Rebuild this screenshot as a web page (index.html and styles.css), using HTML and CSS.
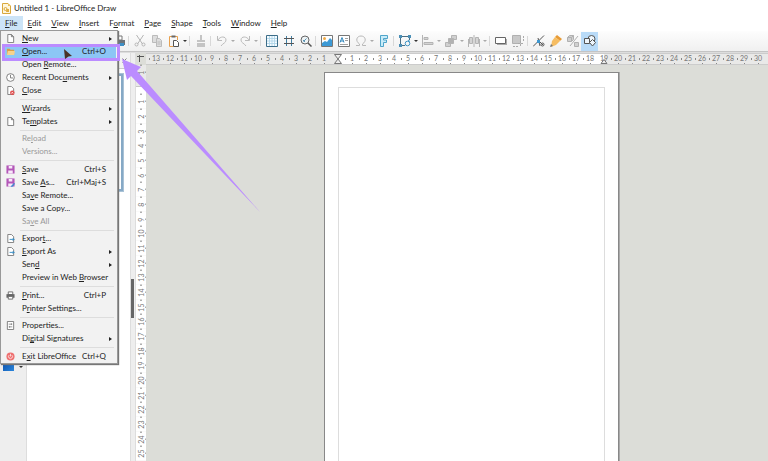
FILE: index.html
```html
<!DOCTYPE html>
<html lang="en">
<head>
    <meta charset="UTF-8">
    <meta name="viewport" content="width=device-width, initial-scale=1.0">
    <title>Untitled 1 - LibreOffice Draw</title>
    <link rel="stylesheet" href="styles.css">
</head>
<body>
    <header class="titlebar">
        <svg class="app-icon" viewBox="0 0 9 11"><path d="M.5.5h5.500l2.500 2.500v7.500h-8z" fill="#fff6dc" stroke="#d9a83c"/><path d="M6 .5v2.500h2.500" fill="#e8bd55"/><circle cx="3.500" cy="6" r="1.500" fill="none" stroke="#d9a83c"/><path d="M4.500 6h2.500v3h-3z" fill="#e0ad42"/></svg>
        <span>Untitled 1 - LibreOffice Draw</span>
    </header>

    <nav class="menubar">
        <button class="active"><u>F</u>ile</button>
        <button><u>E</u>dit</button>
        <button><u>V</u>iew</button>
        <button><u>I</u>nsert</button>
        <button>F<u>o</u>rmat</button>
        <button><u>P</u>age</button>
        <button><u>S</u>hape</button>
        <button><u>T</u>ools</button>
        <button><u>W</u>indow</button>
        <button><u>H</u>elp</button>
    </nav>

    <div class="toolbar">
        <button class="tool" aria-label="Print"><svg viewBox="0 0 12 12"><path d="M3 1h6v4H3z" fill="#fff" stroke="#777"/><path d="M0 5h12v5H0z" fill="#6d7378"/><path d="M6 8h5v3H6z" fill="#3f8fc4"/></svg></button>
        <i class="sep"></i>
        <button class="tool" aria-label="Cut"><svg viewBox="0 0 12 12" fill="none" stroke="#b5b5b5"><path d="M2.500 0l6 9M9.500 0l-6 9"/><circle cx="2.500" cy="9.500" r="1.500"/><circle cx="9.500" cy="9.500" r="1.500"/></svg></button>
        <button class="tool" aria-label="Copy"><svg viewBox="0 0 12 12" fill="#ddd" stroke="#bbb"><path d="M1.500.5h5v7h-5z"/><path d="M5.500 3.500h3l2 2v6h-5z"/><path d="M6.500 7h3M6.500 9h3"/></svg></button>
        <button class="tool" aria-label="Paste"><svg viewBox="0 0 12 12"><path d="M5 11.500H1.500v-10h8V5" fill="none" stroke="#e9a04c"/><path d="M3.500.5h4v2h-4z" fill="#666"/><path d="M5.500 5.500h3l2 2v4h-5z" fill="#fff" stroke="#555"/></svg></button>
        <button class="drop" aria-label="Paste options"></button>
        <i class="sep"></i>
        <button class="tool" aria-label="Clone formatting"><svg viewBox="0 0 12 12" fill="#c4c4c4"><path d="M5 0h2v5h3v2H2V5h3zM2 8h8v4H2z"/></svg></button>
        <i class="sep"></i>
        <button class="tool" aria-label="Undo"><svg viewBox="0 0 12 12" fill="none" stroke="#bcbcbc"><path d="M1.500 1v4.500H6M2 5c2-4 8-4 8 0 0 3-3 3-5 6"/></svg></button>
        <button class="drop off" aria-label="Undo list"></button>
        <button class="tool" aria-label="Redo"><svg viewBox="0 0 12 12" fill="none" stroke="#bcbcbc"><path d="M10.500 1v4.500H6M10 5C8 1 2 1 2 5c0 3 3 3 5 6"/></svg></button>
        <button class="drop off" aria-label="Redo list"></button>
        <i class="sep"></i>
        <button class="tool" aria-label="Display grid"><svg viewBox="0 0 12 12"><path d="M.5.5h11v11H.5z" fill="#f4fbff" stroke="#3c6d88"/><path d="M3.500 1v10M6 1v10M8.500 1v10M1 3.500h10M1 6h10M1 8.500h10" stroke="#a9d2e6" stroke-width=".8"/></svg></button>
        <button class="tool" aria-label="Helplines"><svg viewBox="0 0 12 12" fill="none"><path d="M3.500 1v10M8.500 1v10" stroke="#3f7fa3"/><path d="M1 3.500h10M1 8.500h10" stroke="#555"/></svg></button>
        <button class="tool" aria-label="Zoom"><svg viewBox="0 0 12 12" fill="none"><circle cx="5" cy="5" r="4" fill="#eef3f5" stroke="#666"/><path d="M8 8l3.500 3.500" stroke="#555" stroke-width="1.500"/><path d="M3.500 6.500l3-3M3 5l2 2" stroke="#5c96b6"/></svg></button>
        <i class="sep"></i>
        <button class="tool" aria-label="Insert image"><svg viewBox="0 0 12 12"><path d="M.5.5h11v11H.5z" fill="#fff" stroke="#777"/><path d="M1 8l3-2 2 1 3-4 2 2v6H1z" fill="#3d9ad6"/><circle cx="3.500" cy="3.500" r="1.500" fill="#f0ab46"/></svg></button>
        <button class="tool" aria-label="Insert text box"><svg viewBox="0 0 12 12" fill="none"><path d="M.5.500h11v11H.5z" fill="#fff" stroke="#777"/><path d="M2 7.500l2-5 2 5M2.500 6h3" stroke="#2f86bd"/><path d="M7 3.500h3M7 5.500h3M2 9.500h8" stroke="#888" stroke-width=".8"/></svg></button>
        <button class="tool" aria-label="Special character"><svg viewBox="0 0 12 12" fill="none" stroke="#b8b8b8"><path d="M1 10.500h3.500V9C0 6 1.500 1 6 1s6 5 1.500 8v1.500H11"/></svg></button>
        <button class="drop off" aria-label="Character list"></button>
        <button class="tool" aria-label="Fontwork"><svg viewBox="0 0 12 12" fill="#c9ecf9" stroke="#3f9cc4" stroke-width=".9"><path d="M2.500 .5h7v3h-4v1.500h3v2.500h-3v4h-3z"/></svg></button>
        <i class="sep"></i>
        <button class="tool" aria-label="Transformations"><svg viewBox="0 0 12 12" fill="none"><path d="M6 10.500H1.500v-9h9V5" stroke="#4b6f85"/><path d="M0 0h3v3H0zM9 0h3v3H9zM0 9h3v3H0z" fill="#4b8fb6"/><circle cx="8.500" cy="8.500" r="2.300" stroke="#3f94c4"/><path d="M9 5l2 1.500" stroke="#3f94c4"/></svg></button>
        <button class="drop" aria-label="Transformation list"></button>
        <button class="tool" aria-label="Align"><svg viewBox="0 0 12 12" fill="#d4d4d4" stroke="#b4b4b4"><path d="M.5 0v12M2 2.500h4v2H2zM2 7.500h9v2H2z"/></svg></button>
        <button class="drop off" aria-label="Align list"></button>
        <button class="tool" aria-label="Arrange"><svg viewBox="0 0 12 12" fill="#d0d0d0" stroke="#b4b4b4"><path d="M6.500.5h5v4h-5zM.5 7.500h5v4h-5z"/><path d="M3.500 3.500h5v5h-5z" fill="#b2b2b2"/></svg></button>
        <button class="drop off" aria-label="Arrange list"></button>
        <button class="tool" aria-label="Distribute"><svg viewBox="0 0 12 12" fill="#d4d4d4" stroke="#b4b4b4"><path d="M.5 4v8M6 0v12M11.500 4v8M1.500 2.500h3v6h-3zM7.500 2.500h3v6h-3z"/></svg></button>
        <button class="drop off" aria-label="Distribute list"></button>
        <i class="sep"></i>
        <button class="tool" aria-label="Shadow"><svg viewBox="0 0 12 12"><path d="M2 4h10v6H2z" fill="#aaa"/><path d="M.5 2.500h10v6H.5z" fill="#fff" stroke="#666"/></svg></button>
        <button class="tool" aria-label="Crop"><svg viewBox="0 0 12 12"><path d="M.5.500h8v8h-8z" fill="#c8c8c8" stroke="#b0b0b0"/><path d="M1 11.500h5M8.500 6v6M6 8.500h6M11.500 1v6" stroke="#aaa" stroke-dasharray="2 1"/></svg></button>
        <i class="sep"></i>
        <button class="tool" aria-label="Edit points"><svg viewBox="0 0 12 12" fill="none" stroke="#555"><path d="M0 11.500L11 .5M5 3l2 8M6 6l4 4"/><circle cx="9.500" cy="9.500" r="1.500"/><path d="M4 5h3v3H4z" fill="#3c96cf" stroke="none"/></svg></button>
        <button class="tool" aria-label="Glue points"><svg viewBox="0 0 12 12"><path d="M7 0l5 4-2 2-5-4z" fill="#e79a35"/><path d="M5 2l5 4-4 4-5 2 1-6z" fill="#f6bd62"/><path d="M0 12l1-3 2 2z" fill="#777"/></svg></button>
        <button class="tool" aria-label="Toggle extrusion"><svg viewBox="0 0 12 12" fill="#d0d0d0" stroke="#b0b0b0"><path d="M.5 2.500l2-2h4v4l-2 2h-4zM.5 2.500h4v4M4.500 2.500l2-2M7.500 7.500h4v4h-4zM3 11l8-10"/></svg></button>
        <button class="tool on" aria-label="Show draw functions"><svg viewBox="0 0 12 12" fill="#eef6fd" stroke="#555"><circle cx="7.500" cy="4" r="3.500"/><path d="M.5 3.500h5v5h-5z"/><path d="M8.500 4.500l3 3-3 3.500-3-3.500z"/></svg></button>
    </div>

    <main class="workspace">
        <aside class="sidebar">
            <button class="shape-tool" aria-label="3D objects"><span class="cube"></span><span class="caret"></span></button>
        </aside>
        <section class="pages">
            <div class="pages-head"><button class="close" aria-label="Close pane"><svg viewBox="0 0 5 5"><path d="M.5.5l4 4m0-4l-4 4" stroke="#666" stroke-width=".8"/></svg></button></div>
            <div class="thumb"></div>
        </section>
        <div class="splitter"><button class="grip" aria-label="Hide pane"></button></div>
        <div class="editor">
            <div class="corner"><svg viewBox="0 0 7 7"><path d="M0 1.500h7M2.500 0v7" stroke="#555" fill="none"/></svg></div>
            <div class="ruler-h" id="rulerH"></div>
            <div class="ruler-v" id="rulerV"></div>
            <div class="canvas"><div class="page"></div></div>
        </div>
    </main>

    <div class="menu">
        <button><svg viewBox="0 0 10 10" fill="#fff" stroke="#777"><path d="M2 .5h4l2.500 2.500v6.500H2zM6 .5V3h2.500"/></svg><span><u>N</u>ew</span><b></b></button>
        <button class="hot"><svg viewBox="0 0 10 10"><path d="M1 2h3l1 1h4v6H1z" fill="#d99f45"/><path d="M2 4.500h8L9 9H1z" fill="#f8d38a"/></svg><span><u>O</u>pen...</span><kbd>Ctrl+O</kbd></button>
        <button><i></i><span>Open <u>R</u>emote...</span></button>
        <button><svg viewBox="0 0 10 10" fill="#fff" stroke="#777"><circle cx="5" cy="5" r="4.300"/><path d="M5 2v3.500h3" fill="none"/></svg><span>Recent Doc<u>u</u>ments</span><b></b></button>
        <button><svg viewBox="0 0 10 10"><path d="M2 .5h4l2.500 2.500v6.500H2z" fill="#fff" stroke="#777"/><circle cx="7" cy="7.500" r="2.500" fill="#e04a4a"/><path d="M6 6.500l2 2m0-2l-2 2" stroke="#fff" stroke-width=".7"/></svg><span><u>C</u>lose</span></button>
        <hr>
        <button><i></i><span><u>W</u>izards</span><b></b></button>
        <button><svg viewBox="0 0 10 10" fill="#fff" stroke="#777"><path d="M2 .5h4l2.500 2.500v6.500H2zM6 .5V3h2.500"/></svg><span>Te<u>m</u>plates</span><b></b></button>
        <hr>
        <button disabled><i></i><span>Re<u>l</u>oad</span></button>
        <button disabled><i></i><span>Versions...</span></button>
        <hr>
        <button><svg viewBox="0 0 10 10"><path d="M.5.5h9v9h-9z" fill="#b357b8"/><path d="M3 1h4v3H3zM2.500 6h5v3.500h-5z" fill="#f9e9fa"/></svg><span><u>S</u>ave</span><kbd>Ctrl+S</kbd></button>
        <button><svg viewBox="0 0 10 10"><path d="M.5.5h9v9h-9z" fill="#b357b8"/><path d="M3 1h4v3H3zM2.500 6h5v3.500h-5z" fill="#f9e9fa"/><path d="M5 9.500l4-4 1 1-3 3.500z" fill="#3c8fd0"/></svg><span>Save <u>A</u>s...</span><kbd>Ctrl+Maj+S</kbd></button>
        <button><i></i><span>Sa<u>v</u>e Remote...</span></button>
        <button><i></i><span>Save a Copy...</span></button>
        <button disabled><i></i><span>Sa<u>v</u>e All</span></button>
        <hr>
        <button><svg viewBox="0 0 10 10" fill="none"><path d="M2 .5h4l2.500 2.500v6.500H2z" fill="#fff" stroke="#777"/><path d="M4 6h5M7.500 4.500L9 6 7.500 7.500" stroke="#2f8ac4"/></svg><span>Expor<u>t</u>...</span></button>
        <button><svg viewBox="0 0 10 10" fill="none"><path d="M2 .5h4l2.500 2.500v6.500H2z" fill="#fff" stroke="#777"/><path d="M4 6h5M7.500 4.500L9 6 7.500 7.500" stroke="#2f8ac4"/></svg><span><u>E</u>xport As</span><b></b></button>
        <button><i></i><span>Sen<u>d</u></span><b></b></button>
        <button><i></i><span>Preview in Web <u>B</u>rowser</span></button>
        <hr>
        <button><svg viewBox="0 0 10 10"><path d="M2.500 1h5v3h-5z" fill="#fff" stroke="#666"/><path d="M.5 3.500h9v4h-9z" fill="#666"/><path d="M2.500 6h5v3h-5z" fill="#fff" stroke="#666"/></svg><span><u>P</u>rint...</span><kbd>Ctrl+P</kbd></button>
        <button><i></i><span>P<u>r</u>inter Settings...</span></button>
        <hr>
        <button><svg viewBox="0 0 10 10" fill="#fff" stroke="#777"><path d="M1.500.5h7v9h-7z"/><path d="M3 3.500h4M3 6.500h4M6 2.500v2M4 5.500v2" stroke-width=".8"/></svg><span>Propert<u>i</u>es...</span></button>
        <button><i></i><span>Di<u>g</u>ital Signatures</span><b></b></button>
        <hr>
        <button><svg viewBox="0 0 10 10" fill="none"><circle cx="5" cy="5" r="4.500" fill="#ee7070"/><path d="M3.500 3.500a2.200 2.200 0 1 0 3 0M5 2v3" stroke="#fff" stroke-width=".8"/></svg><span>E<u>x</u>it LibreOffice</span><kbd>Ctrl+Q</kbd></button>
    </div>

    <div class="focus-box"></div>
    <svg class="pointer" viewBox="0 0 8 10"><path d="M0 0l8 7-3.500.500L1 10z" fill="#4a3226"/></svg>
    <svg class="arrow" viewBox="0 0 140 156"><path d="M2 2l19 8-4 4 123 141L11 19l-4 4z" fill="#bb8cff"/></svg>

    <script>
        const hourglass = '<svg viewBox="0 0 8 10"><path d="M.5.5h7L.5 9.500h7z" fill="#eee" stroke="#777"/></svg>';
        const indent = '<svg viewBox="0 0 8 10"><path d="M4 5.500l3 4H1z" fill="#eee" stroke="#777"/></svg>';

        // one cell per centimetre, the range inside the page is white
        const fillRuler = (id, from, to, last) => {
            const ruler = document.getElementById(id);
            for (let n = from; n <= to; n++) {
                const cell = document.createElement('span');
                cell.textContent = n === 0 ? '' : Math.abs(n);
                if (n > 0 && n < last) cell.className = 'inside';
                if (n === 0) cell.className = 'zero';
                if (n === last) cell.className = 'last';
                ruler.appendChild(cell);
            }
        };

        fillRuler('rulerH', -13, 30, 19);
        fillRuler('rulerV', -1, 25, 29);
        document.querySelector('.ruler-h .zero').innerHTML = hourglass;
        document.querySelector('.ruler-h .last').innerHTML += indent;
    </script>
</body>
</html>
```

FILE: styles.css
```css
* {
    box-sizing: border-box;
}

body {
    margin: 0;
    height: 100vh;
    display: flex;
    flex-direction: column;
    overflow: hidden;
    position: relative;
    font-family: Lato, sans-serif;
    font-size: 8px;
    line-height: 13px;
    color: #222;
    background: #fff;
}

button {
    font: inherit;
    color: inherit;
    background: none;
    border: none;
    padding: 0;
    margin: 0;
    white-space: nowrap;
}

svg {
    display: block;
}

.titlebar {
    display: flex;
    align-items: center;
    gap: 3px;
    height: 16px;
    padding-left: 2px;
}

.app-icon {
    width: 9px;
    height: 11px;
}

.menubar {
    display: flex;
    height: 15px;
}

.menubar button {
    padding: 0 5px;
}

.menubar .active {
    background: #cce4f7;
}

.toolbar {
    display: flex;
    align-items: center;
    height: 21px;
    padding-left: 110px;
    background: linear-gradient(#fdfdfd, #f0f0f0);
    border-bottom: 1px solid #c4c4c4;
}

.tool {
    flex: none;
    width: 17px;
    height: 19px;
    display: flex;
    align-items: center;
    justify-content: center;
}

.tool svg {
    width: 12px;
    height: 12px;
}

.tool.on {
    background: #b9dbf8;
}

.drop {
    width: 6px;
    height: 19px;
    display: flex;
    align-items: center;
    justify-content: center;
}

.drop::after,
.caret {
    content: "";
    border: 2px solid transparent;
    border-top-color: #333;
    border-bottom: none;
}

.drop.off::after {
    border-top-color: #aaa;
}

.sep {
    width: 1px;
    height: 10px;
    margin: 0 2px 0 1px;
    background: #d8d8d8;
}

.workspace {
    flex: 1;
    display: flex;
    min-height: 0;
    background: #eee;
    border-top: 1px solid #ddd;
}

.sidebar {
    width: 27px;
    padding: 309px 0 0 3px;
    border-right: 1px solid #ddd;
}

.shape-tool {
    display: flex;
    align-items: center;
    gap: 5px;
}

.cube {
    width: 11px;
    height: 9px;
    background: linear-gradient(135deg, #0b51ac, #2a86dc);
}

.pages {
    width: 103px;
    background: #fff;
}

.pages-head {
    display: flex;
    justify-content: flex-end;
    align-items: center;
    height: 16px;
    padding: 0 3px;
    background: #f3f3f3;
    border-bottom: 1px solid #ccc;
}

.close svg {
    width: 5px;
    height: 5px;
}

.thumb {
    height: 119px;
    margin: 4px 6px 0 4px;
    border: 3px solid #86a9c6;
    outline: 1px solid #a9c2d6;
    outline-offset: -1px;
}

.splitter {
    width: 6px;
    display: flex;
    align-items: center;
    background: #eee;
    border-left: 1px solid #ddd;
    border-right: 1px solid #ddd;
}

.grip {
    width: 3px;
    height: 39px;
    margin-top: 82px;
    background: #666;
}

.editor {
    flex: 1;
    min-width: 0;
    display: grid;
    grid-template: 12px 1fr / 10px 1fr;
    background: #dcddd8;
}

.corner {
    padding: 2px 1px;
}

.corner svg {
    width: 7px;
    height: 7px;
}

.ruler-h,
.ruler-v {
    font-size: 7px;
    line-height: 8px;
    color: #777;
}

.ruler-h {
    display: flex;
    height: 12px;
    min-width: 0;
    padding-left: 3px;
    overflow: hidden;
    background: #e9e9e8;
    border-top: 1px solid #ccc;
    border-bottom: 1px solid #ccc;
}

/* half mark on the cell edge, full mark under the number */
.ruler-h span {
    flex: none;
    width: 14px;
    text-align: center;
    background:
        linear-gradient(#888, #888) left center / 1px 2px no-repeat,
        linear-gradient(#888, #888) center bottom / 1px 1px no-repeat;
}

.ruler-h .inside {
    background-color: #fff;
}

.ruler-h .zero {
    background: linear-gradient(90deg, #e9e9e8 50%, #fff 50%);
}

.ruler-h .last {
    position: relative;
    background: linear-gradient(90deg, #fff 50%, #e9e9e8 50%);
}

.ruler-h svg {
    width: 8px;
    height: 10px;
    margin: 0 auto;
}

.ruler-h .last svg {
    position: absolute;
    top: 0;
    left: 3px;
}

.ruler-v {
    display: grid;
    grid-auto-rows: 1fr;
    background: #e9e9e8;
    min-height: 0;
}

.ruler-v span {
    writing-mode: vertical-rl;
    transform: rotate(180deg);
    text-align: center;
    min-height: 0;
    line-height: 10px;
    background:
        linear-gradient(#888, #888) center bottom / 2px 1px no-repeat,
        linear-gradient(#888, #888) left center / 1px 1px no-repeat;
}

.ruler-v .inside {
    background-color: #fff;
}

.ruler-v .zero {
    background: linear-gradient(#fff 50%, #aaa 50%, #e9e9e8 60%);
}

.canvas {
    overflow: hidden;
    padding: 7px 0 0 178px;
}

.page {
    width: 295px;
    height: 100%;
    padding: 14px 13px 0;
    background: #fff;
    border: 1px solid #888;
    border-bottom: none;
    box-shadow: 1px 0 0 #aaa;
}

.page::before {
    content: "";
    display: block;
    height: 100%;
    border: 1px solid #ddd;
    border-bottom: none;
}

.menu {
    position: absolute;
    top: 30px;
    left: 0;
    width: 118px;
    padding: 1px 1px 0;
    background: #f2f2f2;
    border: 1px solid #999;
    box-shadow: 1px 1px 1px #777;
}

.menu button {
    display: flex;
    align-items: center;
    width: 100%;
    height: 13px;
    padding: 0 4px;
    text-align: left;
}

.menu button svg,
.menu button i {
    flex: none;
    width: 9px;
    height: 9px;
    margin-right: 7px;
}

.menu button span {
    flex: 1;
}

.menu button kbd {
    font: inherit;
    margin-right: 6px;
}

.menu button b {
    border: 2px solid transparent;
    border-left: 3px solid #222;
    border-right: none;
}

.menu button:disabled {
    color: #999;
}

.menu .hot {
    background: #8cc6f5;
}

.menu hr {
    height: 1px;
    margin: 2px 2px 1px 18px;
    border: none;
    background: #ddd;
}

.menu hr:nth-of-type(odd) {
    margin-bottom: 2px;
}

.focus-box {
    position: absolute;
    top: 44px;
    left: 2px;
    width: 118px;
    height: 17px;
    border: 3px solid #bb8cff;
}

.pointer {
    position: absolute;
    top: 49px;
    left: 64px;
    width: 8px;
    height: 10px;
}

.arrow {
    position: absolute;
    top: 57px;
    left: 120px;
    width: 140px;
    height: 156px;
}
```
